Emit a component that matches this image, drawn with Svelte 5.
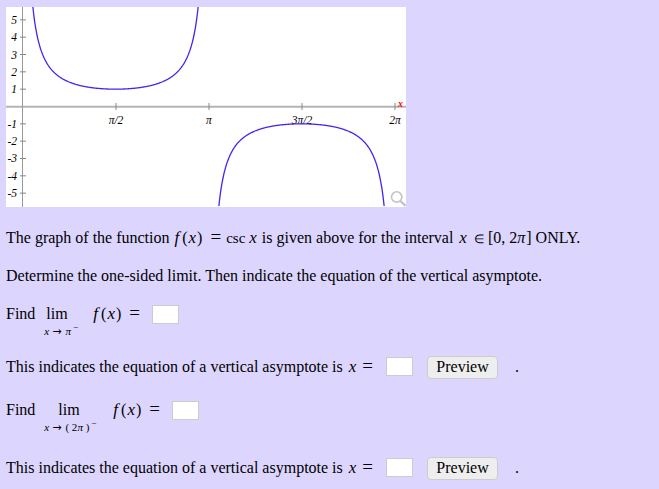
<script>
  const originX = 22.5;
  const originY = 106.5;
  const scaleX = 93 / (Math.PI / 2);
  const scaleY = 17.33;
  const top = 0;
  const bottom = 200;

  // csc x on one open interval, clipped to the plot height
  function branch(from, to) {
    const pts = [];
    for (let i = 0; i <= 300; i++) {
      const t = from + ((to - from) * i) / 300;
      const y = originY - 7 - scaleY / Math.sin(t);
      if (y < top - 2 || y > bottom + 2) continue;
      pts.push(`${(originX - 6 + t * scaleX).toFixed(2)},${y.toFixed(2)}`);
    }
    return "M" + pts.join("L");
  }

  const xTicks = [
    { x: 110, label: "π/2" },
    { x: 203, label: "π" },
    { x: 296, label: "3π/2" },
    { x: 389, label: "2π" },
  ];
  const yTicks = [5, 4, 3, 2, 1, -1, -2, -3, -4, -5];
</script>

<div class="page">
  <svg class="graph" width="400" height="200" viewBox="0 0 400 200">
    <rect width="400" height="200" fill="#fff" />
    <line x1="0" x2="400" y1="99.7" y2="99.7" class="axis" />
    <line x1="16.5" x2="16.5" y1="0" y2="200" class="axis-y" />
    {#each xTicks as t}
      <line x1={t.x} x2={t.x} y1="96" y2="103" class="tick" />
      <text x={t.x} y="117" class="label" text-anchor="middle">{t.label}</text>
    {/each}
    {#each yTicks as v}
      <line x1="14" x2="20" y1={99.5 - v * scaleY} y2={99.5 - v * scaleY} class="tick" />
      <text x="11" y={103.5 - v * scaleY} class="label" text-anchor="end">{v}</text>
    {/each}
    <text x="392" y="100" class="x-label">x</text>
    <path d={branch(0.02, Math.PI - 0.02)} class="curve" />
    <path d={branch(Math.PI + 0.02, 2 * Math.PI - 0.02)} class="curve" />
    <g class="zoom-icon">
      <circle cx="390.7" cy="190" r="5.2" />
      <line x1="394.5" y1="194" x2="399.5" y2="199" />
    </g>
  </svg>

  <p class="first">The graph of the function <i class="f">f</i>(<i class="x">x</i>)<span class="eq">=</span><span class="csc">csc</span><i class="x after">x</i> is given above for the interval <i class="x after">x</i><span class="in">∈</span>[0, 2<i class="m">π</i>] ONLY.</p>
  <p>Determine the one-sided limit. Then indicate the equation of the vertical asymptote.</p>

  <div class="row find">
    <span>Find</span>
    <span class="lim">lim<small><i>x</i><span class="arrow">→</span><i>π</i><sup>−</sup></small></span>
    <span class="expr"><i class="f">f</i>(<i class="x">x</i>)<span class="eq">=</span></span>
    <span class="box"></span>
  </div>

  <div class="row asym">
    <span>This indicates the equation of a vertical asymptote is <i class="x after">x</i><span class="eq">=</span></span>
    <span class="box"></span>
    <button>Preview</button>
    <span class="dot">.</span>
  </div>

  <div class="row find second">
    <span>Find</span>
    <span class="lim wide">lim<small><i>x</i><span class="arrow">→</span>( 2<i>π</i> )<sup>−</sup></small></span>
    <span class="expr"><i class="f">f</i>(<i class="x">x</i>)<span class="eq">=</span></span>
    <span class="box"></span>
  </div>

  <div class="row asym last">
    <span>This indicates the equation of a vertical asymptote is <i class="x after">x</i><span class="eq">=</span></span>
    <span class="box"></span>
    <button>Preview</button>
    <span class="dot">.</span>
  </div>
</div>

<style>
  :global(body) {
    background: #dcd6ff;
  }

  .page {
    padding: 7px 6px 12px;
    font-family: "Liberation Serif", serif;
    font-size: 16px;
    line-height: 18px;
    color: #000;
  }

  .graph {
    display: block;
  }

  .axis {
    stroke: #b4b4b4;
    stroke-width: 2;
  }

  .axis-y {
    stroke: #999;
    stroke-width: 1;
  }

  .tick {
    stroke: #888;
    stroke-width: 1;
  }

  .label {
    font-family: "Liberation Serif", serif;
    font-style: italic;
    font-size: 11.5px;
    fill: #000;
  }

  .x-label {
    font-family: "Liberation Serif", serif;
    font-style: italic;
    font-weight: bold;
    font-size: 10px;
    fill: #f00;
  }

  .curve {
    fill: none;
    stroke: #4a22f0;
    stroke-width: 1.3;
  }

  .zoom-icon {
    fill: none;
    stroke: #c4c4c4;
  }

  .zoom-icon circle {
    stroke-width: 1.6;
  }

  .zoom-icon line {
    stroke-width: 2.4;
  }

  p {
    margin: 20px 0 0;
  }

  .first {
    margin-top: 22px;
  }

  .m {
    font-style: italic;
    margin-right: 1px;
  }

  .f {
    font-style: italic;
    font-size: 17px;
    margin-left: 1px;
    margin-right: 3px;
  }

  .x {
    font-style: italic;
    font-size: 17px;
    margin: 0 1px;
  }

  .x.after {
    margin: 0 1px 0 2px;
  }

  .eq {
    font-size: 19px;
    line-height: 0;
    margin: 0 4px 0 8px;
  }

  .csc {
    font-size: 15px;
    margin: 0 2px 0 1px;
  }

  .in {
    font-size: 12px;
    line-height: 0;
    margin: 0 4px 0 6px;
  }

  .row {
    display: flex;
    align-items: baseline;
  }

  .find {
    margin-top: 20px;
    height: 35px;
  }

  .asym {
    margin-top: 18px;
    height: 18px;
  }

  .asym .eq {
    margin-left: 5px;
  }

  .second {
    margin-top: 25px;
  }

  .last {
    margin-top: 23px;
  }

  .lim {
    position: relative;
    display: inline-block;
    margin-left: 9px;
    width: 38px;
    padding-left: 2px;
  }

  .lim.wide {
    width: 46px;
    margin-left: 9px;
    padding-left: 14px;
  }

  .lim small {
    position: absolute;
    left: 0;
    top: 20px;
    white-space: nowrap;
    font-size: 11px;
    line-height: 12px;
  }

  .arrow {
    font-family: "DejaVu Sans", sans-serif;
    font-size: 11px;
    margin: 0 4px 0 3px;
  }

  .lim sup {
    font-size: 9px;
    line-height: 0;
    margin-left: 2px;
  }

  .expr {
    margin-left: 8px;
  }

  .box {
    align-self: flex-start;
    width: 25px;
    height: 17px;
    margin-left: 8px;
    background: #fff;
    border: 1px solid #ccc;
  }

  .asym .box {
    margin-left: 9px;
    margin-top: -1px;
  }

  button {
    align-self: center;
    width: 71px;
    height: 23px;
    margin-left: 14px;
    padding: 0;
    font: 16px "Liberation Serif", serif;
    background: #eee;
    border: 1px solid #ccc;
    border-radius: 4px;
    color: #000;
  }

  .dot {
    margin-left: 17px;
  }
</style>
